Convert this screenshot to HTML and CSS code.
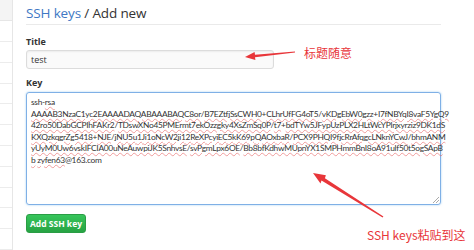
FILE: index.html
```html
<!DOCTYPE html>
<html>
<head>
<meta charset="utf-8">
<link rel="stylesheet" href="styles.css">
</head>
<body>
<div class="page">
  <aside class="sidebar">
    <div class="side-head"></div>
    <div class="side-item"></div><div class="side-item"></div><div class="side-item"></div>
    <div class="side-item"></div><div class="side-item"></div><div class="side-item"></div>
    <div class="side-item"></div><div class="side-item"></div><div class="side-item"></div>
    <div class="side-item"></div><div class="side-item"></div>
  </aside>
  <main class="main">
    <h2 class="title"><a class="crumb">SSH keys</a> / Add new</h2>
    <div class="group">
      <label class="label">Title</label>
      <div class="input">test</div>
    </div>
    <div class="group group-key">
      <label class="label">Key</label>
      <div class="textarea">
        <div class="kl">ssh-<span class="sp">rsa</span></div>
        <div class="kl"><span class="sp">AAAAB3NzaC1yc2EAAAADAQABAAABAQC8or</span>/<span class="sp">B7EZtfjSsCWH0</span>+<span class="sp">CLhrUfFG4oT5</span>/<span class="sp">vKDgEbW0gzz</span>+<span class="sp">I7fNBYqI8vaF5YgQ9</span></div>
        <div class="kl"><span class="sp">42ro50DabGCPIhFAKr2</span>/<span class="sp">TDswXNo45PMErmt7ekOzzgky4XsZmSq0P</span>/<span class="sp">t7</span>+<span class="sp">bdTYw5JFypUzPLX2HLtWcYPlrjxyrziz9DK1dS</span></div>
        <div class="kl"><span class="sp">KXQzkqgrZg5418</span>+<span class="sp">NJE</span>/<span class="sp">jNU5u1Ji1oNcW2ji12ReXPcyiEC5kK69pQAOxbaR</span>/<span class="sp">PCX9PHQI9fjcRrAfqgcLNknYCwJ</span>/<span class="sp">bhmANM</span></div>
        <div class="kl"><span class="sp">yUyM0Uw6vskIFCIA00uNeAuwpiJK5SnhvsE</span>/<span class="sp">svPgmLpx6OE</span>/<span class="sp">Bb8bfKdhwMUpnYX1SMPHmmBnI8oA91ulf50t5ogSApB</span></div>
        <div class="kl"><span class="sp">b</span> <span class="sp">zyfen63</span>@163.com</div>
        <span class="grip"></span>
      </div>
    </div>
    <button class="btn">Add SSH key</button>
  </main>
</div>
<svg class="arrows" width="474" height="250" viewBox="0 0 474 250">
  <polygon fill="#e8363a" points="295,51.4 255,54.8 254.6,52 245,57 255.4,60 255,57.3 295,52.6"/>
  <polygon fill="#e8363a" points="383.4,216.5 324.9,178.3 325.9,175.2 313,173 320.5,183.6 321.5,180.5 382.6,217.5"/>
</svg>
<span class="note note-title">标题随意</span>
<span class="note note-key">SSH keys粘贴到这</span>
</body>
</html>
```

FILE: styles.css
```css
html, body {
  margin: 0;
  padding: 0;
  background: #fff;
}
body {
  width: 474px;
  height: 250px;
  overflow: hidden;
  position: relative;
  font-family: "Open Sans", "Noto Sans", sans-serif;
  color: #333;
}
.page {
  display: flex;
  height: 250px;
}
.sidebar {
  width: 12px;
  flex: none;
  border-right: 1px solid #e6e6e6;
  display: flex;
  flex-direction: column;
}
.side-head {
  height: 21px;
  background: #f4f4f4;
  border-bottom: 1px solid #e6e6e6;
}
.side-item {
  height: 20.5px;
  border-bottom: 1px solid #ececec;
}
.main {
  width: 415px;
  margin-left: 13px;
  display: flex;
  flex-direction: column;
}
.title {
  margin: 0;
  padding-top: 3px;
  height: 21px;
  font-size: 13.5px;
  font-weight: 400;
  line-height: 20px;
  border-bottom: 1px solid #eaeaea;
  color: #333;
  letter-spacing: -0.15px;
}
.crumb {
  color: #4078c4;
  text-decoration: none;
}
.group {
  display: flex;
  flex-direction: column;
  margin-top: 11px;
}
.group-key {
  margin-top: 8px;
}
.label {
  font-size: 9px;
  font-weight: 700;
  line-height: 12px;
  color: #333;
}
.input {
  margin-top: 2px;
  box-sizing: border-box;
  width: 248px;
  height: 19px;
  border: 1px solid #dcdcdc;
  border-radius: 3px;
  background: #fafafa;
  box-shadow: inset 0 1px 2px rgba(0,0,0,0.06);
  font-size: 9px;
  line-height: 17px;
  padding-left: 4px;
  color: #333;
}
.textarea {
  position: relative;
  margin-top: 3px;
  box-sizing: border-box;
  width: 415px;
  height: 113px;
  border: 1px solid #7fb0e6;
  border-radius: 3px;
  box-shadow: 0 0 2px rgba(81,167,232,0.6);
  padding: 4px 0 0 4px;
  font-family: "Lato", "Open Sans", sans-serif;
  font-size: 8.4px;
  letter-spacing: -0.3px;
  line-height: 11.5px;
  color: #333;
}
.kl {
  white-space: pre;
}
.sp {
  text-decoration-line: underline;
  text-decoration-style: wavy;
  text-decoration-color: rgba(226, 70, 70, 0.5);
  text-decoration-thickness: 1px;
  text-underline-offset: 1px;
}
.grip {
  position: absolute;
  right: 1px;
  bottom: 1px;
  width: 6px;
  height: 6px;
  background: linear-gradient(135deg, transparent 0 45%, #aaa 45% 55%, transparent 55% 70%, #aaa 70% 80%, transparent 80%);
}
.btn {
  margin-top: 9px;
  width: 60px;
  height: 19px;
  padding: 0;
  border: 1px solid #2a9d45;
  border-radius: 3px;
  background: linear-gradient(#36c55b, #27a343);
  color: #fff;
  font-family: "Open Sans", "Noto Sans", sans-serif;
  font-weight: 700;
  font-size: 8.5px;
  line-height: 17px;
}
.arrows {
  position: absolute;
  left: 0;
  top: 0;
}
.note {
  position: absolute;
  font-family: "Noto Sans CJK SC", "Noto Sans", sans-serif;
  font-size: 12px;
  line-height: 16px;
  color: #e8363a;
  white-space: nowrap;
}
.note-title {
  left: 304px;
  top: 45px;
}
.note-key {
  left: 367px;
  top: 227px;
}
```
